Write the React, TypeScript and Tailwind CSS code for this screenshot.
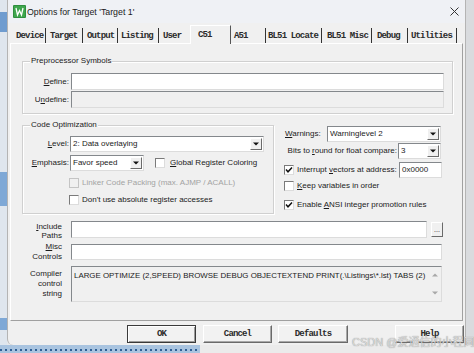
import React from "react";

const mono = "[font-family:'Liberation_Mono',monospace] font-bold text-[9px] tracking-[-0.85px] text-[#2b2b2b]";
const sunken =
  "border border-t-[#84888c] border-l-[#84888c] border-r-[#dcdcdc] border-b-[#dcdcdc]";

interface BoxProps {
  className?: string;
  disabled?: boolean;
  children?: React.ReactNode;
}

const Field: React.FC<BoxProps> = ({ className = "", disabled = false, children }) => (
  <div
    className={`flex items-center pl-[2px] ${sunken} ${disabled ? "bg-[#f0f0f0]" : "bg-white"} ${className}`}
  >
    {children}
  </div>
);

const Combo: React.FC<{ className?: string; value: string }> = ({ className = "", value }) => (
  <div className={`flex items-stretch bg-white ${sunken} ${className}`}>
    <span className="flex flex-1 items-center truncate pl-[2px]">{value}</span>
    <div className="m-[1px] flex w-[12px] items-center justify-center border border-t-white border-l-white border-r-[#6b6b6b] border-b-[#6b6b6b] bg-[#f0f0f0]">
      <svg width="6" height="4" viewBox="0 0 6 4">
        <path d="M0 0.5h6L3 3.5z" fill="#111" />
      </svg>
    </div>
  </div>
);

const Check: React.FC<{ checked?: boolean; disabled?: boolean }> = ({ checked, disabled }) => (
  <div
    className={`flex h-[10px] w-[10px] shrink-0 items-center justify-center border ${
      disabled
        ? "border-[#c4c4c4] bg-[#f0f0f0]"
        : "border-t-[#7a7a7a] border-l-[#7a7a7a] border-r-[#dcdcdc] border-b-[#dcdcdc] bg-white"
    }`}
  >
    {checked && (
      <svg width="8" height="8" viewBox="0 0 8 8">
        <path d="M1 3.6 L3 5.8 L7 1.4" stroke="#111" strokeWidth="1.5" fill="none" />
      </svg>
    )}
  </div>
);

const Group: React.FC<{ title: string; className?: string; children?: React.ReactNode }> = ({
  title,
  className = "",
  children,
}) => (
  <div className={`relative border border-[#d0d0d0] shadow-[inset_1px_1px_0_#fff,1px_1px_0_#fff] ${className}`}>
    <span className="absolute left-[7px] top-[-6px] bg-[#f0f0f0] px-[1px] leading-[10px]">{title}</span>
    {children}
  </div>
);

const tabs = [
  { label: "Device", cls: "w-[32px] pl-[2px] border-r" },
  { label: "Target", cls: "w-[37px] pl-[4px] border-r" },
  { label: "Output", cls: "w-[35px] pl-[4px] border-r" },
  { label: "Listing", cls: "w-[41px] pl-[3px] border-r" },
  { label: "User", cls: "w-[31px] pl-[4px]" },
  { label: "C51", cls: "" },
  { label: "A51", cls: "w-[35px] pl-[3px] border-r" },
  { label: "BL51 Locate", cls: "w-[56px] pl-[2px] border-r" },
  { label: "BL51 Misc", cls: "w-[50px] pl-[5px] border-r" },
  { label: "Debug", cls: "w-[36px] pl-[5px] border-r" },
  { label: "Utilities", cls: "w-[49px] pl-[3px] border-r" },
];

const Button: React.FC<{ label: string; cls: string; primary?: boolean }> = ({ label, cls, primary }) => (
  <div
    className={`flex h-[18px] items-center justify-center bg-[#f2f2f2] ${mono} ${cls} ${
      primary
        ? "border border-[#3a3a3a] shadow-[inset_1px_1px_0_#fff,inset_-1px_-1px_0_#9a9a9a]"
        : "border border-t-white border-l-white border-r-[#6a6a6a] border-b-[#6a6a6a] shadow-[inset_-1px_-1px_0_#a8a8a8]"
    }`}
  >
    {label}
  </div>
);

const App: React.FC = () => {
  return (
    <div className="relative flex h-[353px] w-[474px] flex-col overflow-hidden bg-[#e6e8eb] text-[8px] leading-[10px] text-[#1b1b1b] [font-family:'Liberation_Sans',Arial,sans-serif]">
      <div className="flex h-[345px]">
        {/* desktop behind, left side */}
        <div className="flex w-[7px] flex-col bg-[#dfe6ee]">
          <div className="mt-[12px] h-[20px] bg-[#6f9ccf]" />
          <div className="mt-[140px] h-[34px] bg-[#7ea8d6]" />
          <div className="mt-[112px] h-[12px] bg-[#7ea8d6]" />
        </div>

        {/* dialog window */}
        <div className="flex w-[459px] flex-col rounded-bl-[6px] border-l border-r border-[#b4b4b4] bg-[#f0f0f0]">
          {/* title bar */}
          <div className="flex h-[23px] items-center bg-[#eff1f5]">
            <svg className="ml-[5px]" width="13" height="13" viewBox="0 0 13 13">
              <rect width="13" height="13" rx="1" fill="#2f8f3e" />
              <rect x="1" y="1" width="11" height="11" fill="#3fa64d" />
              <path d="M3 3 L4.5 10 L6.5 5.5 L8.5 10 L10 3" stroke="#fff" strokeWidth="1.3" fill="none" />
            </svg>
            <span className="ml-[1px] text-[8.8px] text-[#1a1a1a]">Options for Target 'Target 1'</span>
            <svg className="ml-auto mr-[6px]" width="9" height="9" viewBox="0 0 9 9">
              <path d="M0.5 0.5 L8.5 8.5 M8.5 0.5 L0.5 8.5" stroke="#333" strokeWidth="1" />
            </svg>
          </div>

          {/* tabs */}
          <div className="flex h-[20px] items-end pl-[6px]">
            {tabs.map((t) =>
              t.label === "C51" ? (
                <div
                  key={t.label}
                  className={`relative z-10 -mb-px flex h-[19px] w-[41px] items-center border-t border-l border-r border-t-white border-l-white border-r-[#555] bg-[#f0f0f0] pl-[7px] ${mono}`}
                >
                  {t.label}
                </div>
              ) : (
                <div
                  key={t.label}
                  className={`flex h-[15px] items-center whitespace-pre border-[#333] ${mono} ${t.cls}`}
                >
                  {t.label}
                </div>
              )
            )}
          </div>

          {/* tab page */}
          <div className="ml-[2px] flex h-[278px] w-[453px] flex-col border border-t-white border-l-white border-r-[#a0a0a0] border-b-[#a0a0a0]">
            <Group title="Preprocessor Symbols" className="ml-[11px] mt-[17px] h-[53px] w-[431px]">
              <div className="mt-[11px] flex items-center">
                <span className="w-[46px] text-right">
                  <u>D</u>efine:
                </span>
                <Field className="ml-[2px] h-[17px] w-[373px]" />
              </div>
              <div className="mt-[1px] flex items-center">
                <span className="w-[46px] text-right">
                  U<u>n</u>define:
                </span>
                <Field disabled className="ml-[2px] h-[17px] w-[373px]" />
              </div>
            </Group>

            <div className="mt-[11px] flex">
              <Group title="Code Optimization" className="ml-[11px] h-[89px] w-[252px]">
                <div className="mt-[10px] flex h-[16px] items-center">
                  <span className="w-[46px] text-right">
                    <u>L</u>evel:
                  </span>
                  <Combo className="ml-[1px] h-[16px] w-[194px]" value="2: Data overlaying" />
                </div>
                <div className="mt-[3px] flex h-[16px] items-center">
                  <span className="w-[46px] text-right">
                    <u>E</u>mphasis:
                  </span>
                  <Combo className="ml-[1px] h-[16px] w-[74px]" value="Favor speed" />
                  <div className="ml-[11px]">
                    <Check />
                  </div>
                  <span className="ml-[5px]">
                    <u>G</u>lobal Register Coloring
                  </span>
                </div>
                <div className="mt-[5px] flex h-[14px] items-center pl-[46px]">
                  <Check disabled />
                  <span className="ml-[3px] text-[#a3a3a3]">Linker Code Packing (max. AJMP / ACALL)</span>
                </div>
                <div className="mt-[3px] flex h-[14px] items-center pl-[46px]">
                  <Check />
                  <span className="ml-[3px]">Don't use absolute register accesses</span>
                </div>
              </Group>

              <div className="ml-[10px] flex w-[158px] flex-col">
                <div className="mt-[1px] flex h-[16px] items-center">
                  <span className="w-[43px] pl-[1px]">
                    <u>W</u>arnings:
                  </span>
                  <Combo className="h-[16px] w-[114px]" value="Warninglevel 2" />
                </div>
                <div className="mt-[1px] flex h-[16px] items-center">
                  <span className="w-[114px] pr-[1px] text-right">
                    Bits to <u>r</u>ound for float compare:
                  </span>
                  <Combo className="h-[16px] w-[43px]" value="3" />
                </div>
                <div className="mt-[3px] flex h-[16px] items-center">
                  <Check checked />
                  <span className="ml-[3px] flex-1">
                    Interrupt <u>v</u>ectors at address:
                  </span>
                  <Field className="h-[16px] w-[43px]">0x0000</Field>
                </div>
                <div className="mt-[1px] flex h-[14px] items-center">
                  <Check />
                  <span className="ml-[3px]">
                    <u>K</u>eep variables in order
                  </span>
                </div>
                <div className="mt-[5px] flex h-[14px] items-center">
                  <Check checked />
                  <span className="ml-[3px]">
                    Enable <u>A</u>NSI integer promotion rules
                  </span>
                </div>
              </div>
            </div>

            <div className="mt-[7px] flex h-[17px] items-start">
              <span className="mt-[1px] w-[51px] text-right leading-[9px]">
                <u>I</u>nclude
                <br />
                Paths
              </span>
              <Field className="ml-[9px] h-[17px] w-[356px]" />
              <div className="ml-[4px] mt-[1px] flex h-[15px] w-[12px] items-end justify-center border border-t-white border-l-white border-r-[#6a6a6a] border-b-[#6a6a6a] bg-[#f0f0f0] pb-[3px] text-[7px] leading-[7px]">
                ...
              </div>
            </div>

            <div className="mt-[6px] flex h-[16px] items-start">
              <span className="-mt-[2px] w-[51px] text-right leading-[10px]">
                <u>M</u>isc
                <br />
                Controls
              </span>
              <Field className="ml-[9px] h-[16px] w-[371px]" />
            </div>

            <div className="mt-[6px] flex h-[36px] items-start">
              <span className="mt-[3px] w-[51px] text-right leading-[10px]">
                Compiler
                <br />
                control
                <br />
                string
              </span>
              <div className={`ml-[9px] flex h-[36px] w-[371px] bg-[#f0f0f0] ${sunken}`}>
                <span className="flex-1 whitespace-nowrap pl-[2px] pt-[4px] text-[7.9px]">
                  LARGE OPTIMIZE (2,SPEED) BROWSE DEBUG OBJECTEXTEND PRINT(.\Listings\*.lst) TABS (2)
                </span>
                <div className="flex w-[12px] flex-col items-center justify-between py-[6px]">
                  <svg width="6" height="4" viewBox="0 0 6 4">
                    <path d="M0 3.5h6L3 0.5z" fill="#a8a8a8" />
                  </svg>
                  <svg width="6" height="4" viewBox="0 0 6 4">
                    <path d="M0 0.5h6L3 3.5z" fill="#a8a8a8" />
                  </svg>
                </div>
              </div>
            </div>
          </div>

          {/* buttons */}
          <div className="mt-[4px] flex pl-[119px]">
            <Button label="OK" cls="w-[69px]" primary />
            <Button label="Cancel" cls="ml-[7px] w-[69px]" />
            <Button label="Defaults" cls="ml-[6px] w-[70px]" />
            <Button label="Help" cls="ml-[47px] w-[69px]" />
          </div>
        </div>

        {/* desktop behind, right side */}
        <div className="flex-1 bg-[#d9dbde]" />
      </div>

      {/* desktop behind, bottom */}
      <div className="flex h-[8px]">
        <div className="flex w-[200px] flex-col justify-end bg-[#a9c4e0] pb-[2px]">
          <div className="h-[2px] bg-[repeating-linear-gradient(90deg,#2f5f96_0_2px,transparent_2px_5px)]" />
        </div>
        <div className="flex-1 bg-[#ebebeb]" />
      </div>

      <span className="absolute left-[352px] top-[335px] whitespace-nowrap text-[11px] leading-[14px] text-[#dcdcdc] [font-family:'Liberation_Sans','Noto_Sans_CJK_SC',sans-serif] [text-shadow:0_0_1px_#7a7a7a]">
        CSDN @爱通信的小程同学
      </span>
    </div>
  );
};

export default App;
